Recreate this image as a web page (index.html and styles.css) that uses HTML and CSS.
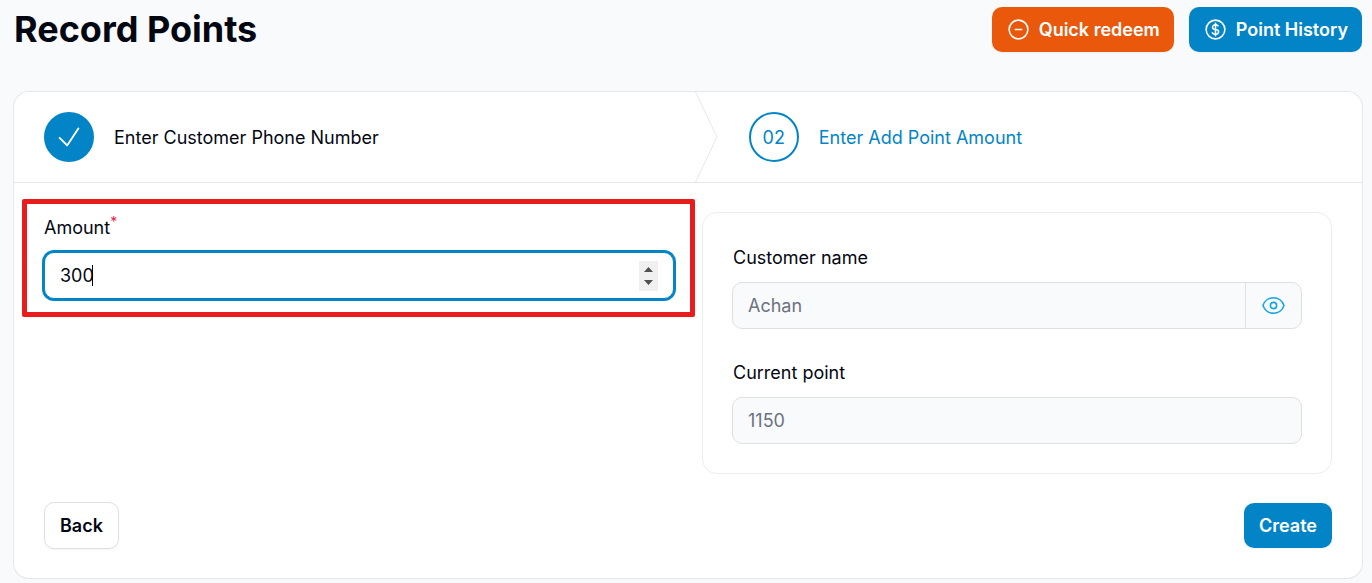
FILE: index.html
```html
<!DOCTYPE html>
<html lang="en">
<head>
    <meta charset="UTF-8">
    <meta name="viewport" content="width=device-width, initial-scale=1.0">
    <title>Record Points</title>
    <link rel="stylesheet" href="styles.css">
</head>
<body>
    <header class="page-header">
        <h1>Record Points</h1>
        <div class="header-actions">
            <button type="button" class="btn btn-redeem">
                <svg class="icon" viewBox="0 0 24 24" aria-hidden="true"><path d="M15 12H9m12 0a9 9 0 11-18 0 9 9 0 0118 0z"/></svg>
                Quick redeem
            </button>
            <button type="button" class="btn btn-primary">
                <svg class="icon" viewBox="0 0 24 24" aria-hidden="true"><path d="M12 6v12m-3-2.818l.879.659c1.171.879 3.07.879 4.242 0 1.172-.879 1.172-2.303 0-3.182C13.536 12.219 12.768 12 12 12c-.725 0-1.45-.22-2.003-.659-1.106-.879-1.106-2.303 0-3.182s2.9-.879 4.006 0l.415.33M21 12a9 9 0 11-18 0 9 9 0 0118 0z"/></svg>
                Point History
            </button>
        </div>
    </header>

    <form class="wizard">
        <!-- Steps -->
        <ol class="steps">
            <li class="step">
                <button type="button" class="step-button">
                    <span class="step-circle done">
                        <svg class="icon icon-check" viewBox="0 0 24 24" aria-hidden="true"><path d="M4.5 12.75l6 6 9-13.5"/></svg>
                    </span>
                    <span class="step-label">Enter Customer Phone Number</span>
                </button>
                <svg class="step-arrow" viewBox="0 0 24 90" preserveAspectRatio="none" aria-hidden="true"><path d="M0.5 0L22 45L0.5 90"/></svg>
            </li>
            <li class="step active">
                <button type="button" class="step-button" aria-current="step">
                    <span class="step-circle"><span class="step-label">02</span></span>
                    <span class="step-label">Enter Add Point Amount</span>
                </button>
            </li>
        </ol>

        <!-- Fields -->
        <div class="step-content">
            <div class="field field-highlight">
                <label for="amount">Amount<sup>*</sup></label>
                <input type="number" id="amount" class="input input-focus" value="300" required>
            </div>

            <div class="customer">
                <div class="field">
                    <label for="customerName">Customer name</label>
                    <div class="input-group">
                        <input type="text" id="customerName" value="Achan" disabled>
                        <button type="button" class="btn-view" aria-label="View customer">
                            <svg class="icon" viewBox="0 0 24 24" aria-hidden="true"><path d="M2.036 12.322a1.012 1.012 0 010-.639C3.423 7.51 7.36 4.5 12 4.5c4.638 0 8.573 3.007 9.963 7.178.07.207.07.431 0 .639C20.577 16.49 16.64 19.5 12 19.5c-4.638 0-8.573-3.007-9.963-7.178z"/><path d="M15 12a3 3 0 11-6 0 3 3 0 016 0z"/></svg>
                        </button>
                    </div>
                </div>
                <div class="field">
                    <label for="currentPoint">Current point</label>
                    <input type="text" id="currentPoint" class="input" value="1150" disabled>
                </div>
            </div>
        </div>

        <div class="wizard-footer">
            <button type="button" class="btn btn-back">Back</button>
            <button type="submit" class="btn btn-primary">Create</button>
        </div>
    </form>
</body>
</html>
```
FILE: styles.css
```css
* {
    box-sizing: border-box;
}

body {
    font-family: Inter, sans-serif;
    font-size: 18px;
    line-height: 30px;
    background-color: #f9fafb;
    color: #030712;
    margin: 0;
    padding: 7px 10px 4px 14px;
}

button, input {
    font: inherit;
    color: inherit;
}

button {
    cursor: pointer;
}

/* Header */
.page-header {
    display: flex;
    align-items: center;
    justify-content: space-between;
    margin-bottom: 40px;
}

h1 {
    margin: 0;
    font-size: 36px;
    line-height: 45px;
    font-weight: 700;
}

.header-actions {
    display: flex;
    gap: 15px;
}

.btn {
    display: flex;
    align-items: center;
    justify-content: center;
    gap: 8px;
    height: 45px;
    padding: 0 15px;
    border: none;
    border-radius: 10px;
    font-weight: 600;
    box-shadow: 0 1px 2px rgba(0, 0, 0, 0.05);
}

.header-actions .btn {
    padding: 0 14px;
}

.btn-primary {
    background-color: #0284c7;
    color: #ffffff;
}

.btn-redeem {
    background-color: #ea580c;
    color: #ffffff;
}

.btn-back {
    height: 47px;
    background-color: #ffffff;
    border: 1px solid #dfe0e3;
}

.icon {
    width: 25px;
    height: 25px;
    fill: none;
    stroke: currentColor;
    stroke-width: 1.5;
    stroke-linecap: round;
    stroke-linejoin: round;
}

.icon-check {
    width: 30px;
    height: 30px;
}

/* Wizard */
.wizard {
    background-color: #ffffff;
    border-radius: 15px;
    box-shadow: 0 0 0 1px #e6e7e9, 0 1px 2px rgba(0, 0, 0, 0.05);
}

.steps {
    display: flex;
    list-style: none;
    margin: 0;
    padding: 0;
    border-bottom: 1px solid #e5e7eb;
}

.step {
    display: flex;
    flex: 1 1 auto;
}

.step.active {
    padding-right: 24px;
    color: #0284c7;
}

.step-button {
    display: flex;
    flex: 1 1 auto;
    align-items: center;
    gap: 20px;
    padding: 20px 0 20px 30px;
    border: none;
    background: none;
    text-align: left;
}

.step-circle {
    display: flex;
    align-items: center;
    justify-content: center;
    width: 50px;
    height: 50px;
    border: 2px solid #0284c7;
    border-radius: 50%;
}

.step-circle.done {
    background-color: #0284c7;
    color: #ffffff;
}

.step-label {
    padding-top: 2px;
}

.step-arrow {
    width: 24px;
    height: 90px;
    fill: none;
    stroke: #e5e7eb;
}

.step-content {
    display: grid;
    grid-template-columns: 1fr 1fr;
    align-items: start;
    gap: 28px;
    padding: 29px 30px 28px;
}

.field {
    display: grid;
    gap: 8px;
}

.field label {
    line-height: 32px;
}

.field sup {
    color: #e11d48;
    font-size: 14px;
    line-height: 0;
}

.input, .input-group {
    width: 100%;
    height: 47px;
    border: 1px solid #dfe0e3;
    border-radius: 10px;
    background-color: #f9fafb;
}

.input {
    padding: 0 15px;
}

input:disabled {
    color: #6b7280;
}

/* Text cursor is painted behind the value */
.input-focus {
    border-color: #0284c7;
    box-shadow: 0 0 0 2px #0284c7;
    outline: none;
    background: #ffffff linear-gradient(#000000, #000000) no-repeat 47px center / 1px 21px;
}

.input-focus::-webkit-inner-spin-button {
    appearance: none;
    -webkit-appearance: none;
    width: 19px;
    height: 30px;
    opacity: 1;
    background: #f0f0f0 url("data:image/svg+xml,%3Csvg xmlns='http://www.w3.org/2000/svg' width='19' height='30'%3E%3Cpath d='M5 11L9.5 6L14 11zM5 19L9.5 24L14 19z' fill='%23505050'/%3E%3C/svg%3E") no-repeat center;
}

.field-highlight {
    position: relative;
}

.field-highlight::after {
    content: "";
    position: absolute;
    inset: -13px -21px -18px -22px;
    border: 5px solid #e81c1c;
    border-radius: 2px;
    pointer-events: none;
}

.customer {
    display: grid;
    gap: 28px;
    padding: 29px;
    border: 1px solid #ededef;
    border-radius: 15px;
}

.customer label {
    padding-left: 1px;
}

.input-group {
    display: flex;
    overflow: hidden;
}

.input-group input {
    flex: 1;
    min-width: 0;
    padding: 0 15px;
    border: none;
    background: none;
}

.btn-view {
    display: flex;
    align-items: center;
    padding: 0 15px;
    border: none;
    border-left: 1px solid #dfe0e3;
    background: none;
    color: #0ea5e9;
}

.wizard-footer {
    display: flex;
    align-items: center;
    justify-content: space-between;
    padding: 0 30px 29px;
}
```
